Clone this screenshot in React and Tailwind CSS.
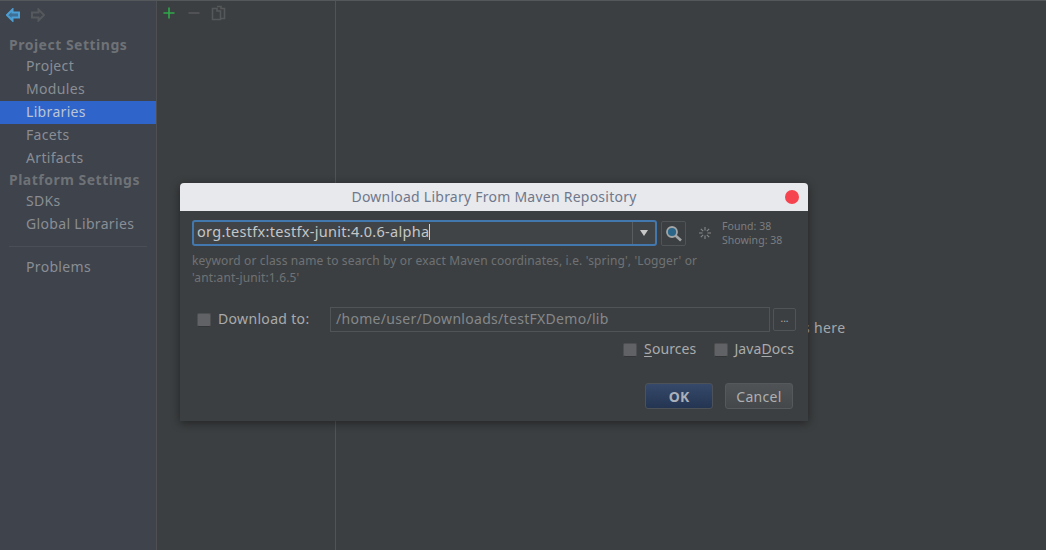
import React from 'react';

const NavItem = ({ label, active }) => (
  <div className={`h-[23px] pl-[26px] pb-[2px] flex items-center text-[14px] tracking-[0.33px] ${active ? 'bg-[#2f65ca] text-[#bbc5d6]' : 'text-[#8a8e94]'}`}>
    {label}
  </div>
);

const NavHeader = ({ label, height }) => (
  <div className={`${height} pl-[9px] flex items-center text-[14px] font-bold text-[#6f7276] tracking-[0.5px]`}>{label}</div>
);

const Check = () => (
  <span className="block w-[14px] h-[14px] rounded-[2px] bg-[#606265] border border-[#4d4f51] border-b-[#333537] shrink-0"></span>
);

const App = () => {
  return (
    <div className="relative w-[1046px] h-[550px] overflow-hidden flex bg-[#3c3f41] font-['Noto_Sans',sans-serif] border-t border-[#55585a]">
      {/* left nav */}
      <div className="w-[157px] shrink-0 bg-[#3e434c] border-r border-[#4d4f52]">
        <div className="h-[27px] flex items-center pl-[6px] gap-[11px]">
          <svg width="14" height="14" viewBox="0 0 14 14">
            <path d="M1 7 L6.5 1.5 V4.5 H13 V9.5 H6.5 V12.5 Z" fill="#3f6f94" stroke="#4b9fd5" strokeWidth="2" />
          </svg>
          <svg width="14" height="14" viewBox="0 0 14 14">
            <path d="M13 7 L7.5 1.5 V4.5 H1 V9.5 H7.5 V12.5 Z" fill="none" stroke="#55585c" strokeWidth="2" />
          </svg>
        </div>
        <div className="mt-[6px]">
          <NavHeader label="Project Settings" height="h-[21px]" />
          <NavItem label="Project" />
          <NavItem label="Modules" />
          <NavItem label="Libraries" active />
          <NavItem label="Facets" />
          <NavItem label="Artifacts" />
          <NavHeader label="Platform Settings" height="h-[19px] mb-px" />
          <NavItem label="SDKs" />
          <NavItem label="Global Libraries" />
          <div className="mx-[9px] mt-[10px] mb-[9px] h-px bg-[#4a4e55]"></div>
          <NavItem label="Problems" />
        </div>
      </div>

      {/* library list */}
      <div className="w-[179px] shrink-0 border-r border-[#515456]">
        <div className="flex items-center h-[24px] pl-[4px] gap-[8px]">
          <svg width="16" height="16" viewBox="0 0 16 16">
            <path d="M8 2.5 V13.5 M2.5 8 H13.5" stroke="#2fa84a" strokeWidth="1.6" />
          </svg>
          <svg width="16" height="16" viewBox="0 0 16 16" className="ml-[1px]">
            <path d="M2.5 8 H13.5" stroke="#55585a" strokeWidth="1.6" />
          </svg>
          <svg width="16" height="16" viewBox="0 0 16 16" className="ml-[1px]">
            <path d="M6 1.5 H10 V3.5 H13.5 V13.5 H9.5 M6 3.5 H1.5 V14.5 H9.5 V6 H6 Z" fill="none" stroke="#55585a" strokeWidth="1.6" />
          </svg>
        </div>
      </div>

      {/* detail */}
      <div className="flex-1 flex justify-center pt-[317px]">
        <span className="text-[14px] text-[#a5a8ab] h-[20px] leading-[20px] tracking-[0.33px]">Select a library to view or edit its details here</span>
      </div>

      {/* dialog */}
      <div className="absolute left-[180px] top-[182px] w-[628px] h-[238px] bg-[#3c3f41] rounded-t-[4px] shadow-[0_2px_10px_rgba(0,0,0,0.45)] flex flex-col">
        <div className="relative h-[28px] bg-[#e8e9ec] rounded-t-[4px] flex items-center justify-center pb-[2px] text-[14px] tracking-[0.24px] text-[#6f788c] shrink-0">
          Download Library From Maven Repository
          <span className="absolute right-[9px] top-[7px] w-[14px] h-[14px] rounded-full bg-[#f5444f]"></span>
        </div>

        <div className="flex items-center h-[35px] pl-[12px] pt-[9px] shrink-0">
          <div className="w-[465px] h-[26px] rounded-[3px] border-2 border-[#4278ad] bg-[#414446] flex items-center">
            <span className="flex-1 pl-[3px] pb-[2px] text-[14.5px] tracking-[0.29px] text-[#c4c6c8] whitespace-nowrap">
              org.testfx:testfx-junit:4.0.6-alpha<span className="inline-block w-px h-[16px] bg-[#d0d0d0] align-[-3px]"></span>
            </span>
            <span className="w-[23px] h-full border-l border-[#5a5d5f] flex items-center justify-center">
              <span className="w-0 h-0 border-x-[4px] border-x-transparent border-t-[6px] border-t-[#c8c8c8]"></span>
            </span>
          </div>
          <div className="ml-[4px] w-[25px] h-[25px] rounded-[2px] border border-[#515456] flex items-center justify-center">
            <svg width="19" height="19" viewBox="0 0 19 19">
              <circle cx="8" cy="8" r="5" fill="#2b6688" stroke="#a3a5a7" strokeWidth="1.8" />
              <path d="M11.5 11.5 L17 16.5" stroke="#a3a5a7" strokeWidth="2.6" />
            </svg>
          </div>
          <svg width="14" height="14" viewBox="0 0 14 14" className="ml-[12px]" stroke="#85888a" strokeWidth="1.1">
            <path d="M7 1 V4.5 M7 9.5 V13 M1 7 H4.5 M9.5 7 H13 M2.8 2.8 L5.2 5.2 M8.8 8.8 L11.2 11.2 M11.2 2.8 L8.8 5.2 M5.2 8.8 L2.8 11.2" />
          </svg>
          <div className="ml-[10px] pb-[1px] text-[10.5px] leading-[14px] tracking-[0.05px] text-[#7b7e81]">
            <div>Found: 38</div>
            <div>Showing: 38</div>
          </div>
        </div>

        <div className="pl-[12px] pt-[6px] w-[560px] text-[12px] leading-[17px] tracking-[0.135px] text-[#6f7275]">
          keyword or class name to search by or exact Maven coordinates, i.e. 'spring', 'Logger' or<br />
          'ant:ant-junit:1.6.5'
        </div>

        <div className="flex items-center pl-[17px] pt-[21px]">
          <Check />
          <span className="ml-[7px] w-[112px] pb-[2px] text-[14px] tracking-[0.33px] text-[#a9abad]">Download to:</span>
          <div className="w-[440px] h-[25px] border border-[#515456] flex items-center pl-[5px] pb-[2px] text-[14px] text-[#85888a] tracking-[0.3px]">
            /home/user/Downloads/testFXDemo/lib
          </div>
          <div className="ml-[3px] w-[23px] h-[23px] rounded-[2px] border border-[#515456] flex items-center justify-center text-[10px] text-[#a9abad] leading-none pb-[3px]">...</div>
        </div>

        <div className="flex items-center justify-end pr-[14px] pt-[6px]">
          <Check />
          <span className="ml-[7px] pb-[2px] text-[14px] tracking-[0.1px] text-[#a9abad]"><span className="underline underline-offset-2">S</span>ources</span>
          <span className="ml-[18px]"><Check /></span>
          <span className="ml-[6px] pb-[2px] text-[14px] tracking-[0.1px] text-[#a9abad]">Java<span className="underline underline-offset-2">D</span>ocs</span>
        </div>

        <div className="flex justify-end gap-[12px] pr-[15px] pt-[22px]">
          <div className="w-[68px] h-[26px] rounded-[3px] border border-[#4d5258] bg-gradient-to-b from-[#36496a] to-[#233551] flex items-center justify-center text-[14px] font-bold text-[#a9b0ba]">OK</div>
          <div className="w-[68px] h-[26px] rounded-[3px] border border-[#56595b] bg-gradient-to-b from-[#505355] to-[#45484a] flex items-center justify-center text-[14px] tracking-[0.3px] text-[#aeb0b2]">Cancel</div>
        </div>
      </div>
    </div>
  );
};

export default App;
